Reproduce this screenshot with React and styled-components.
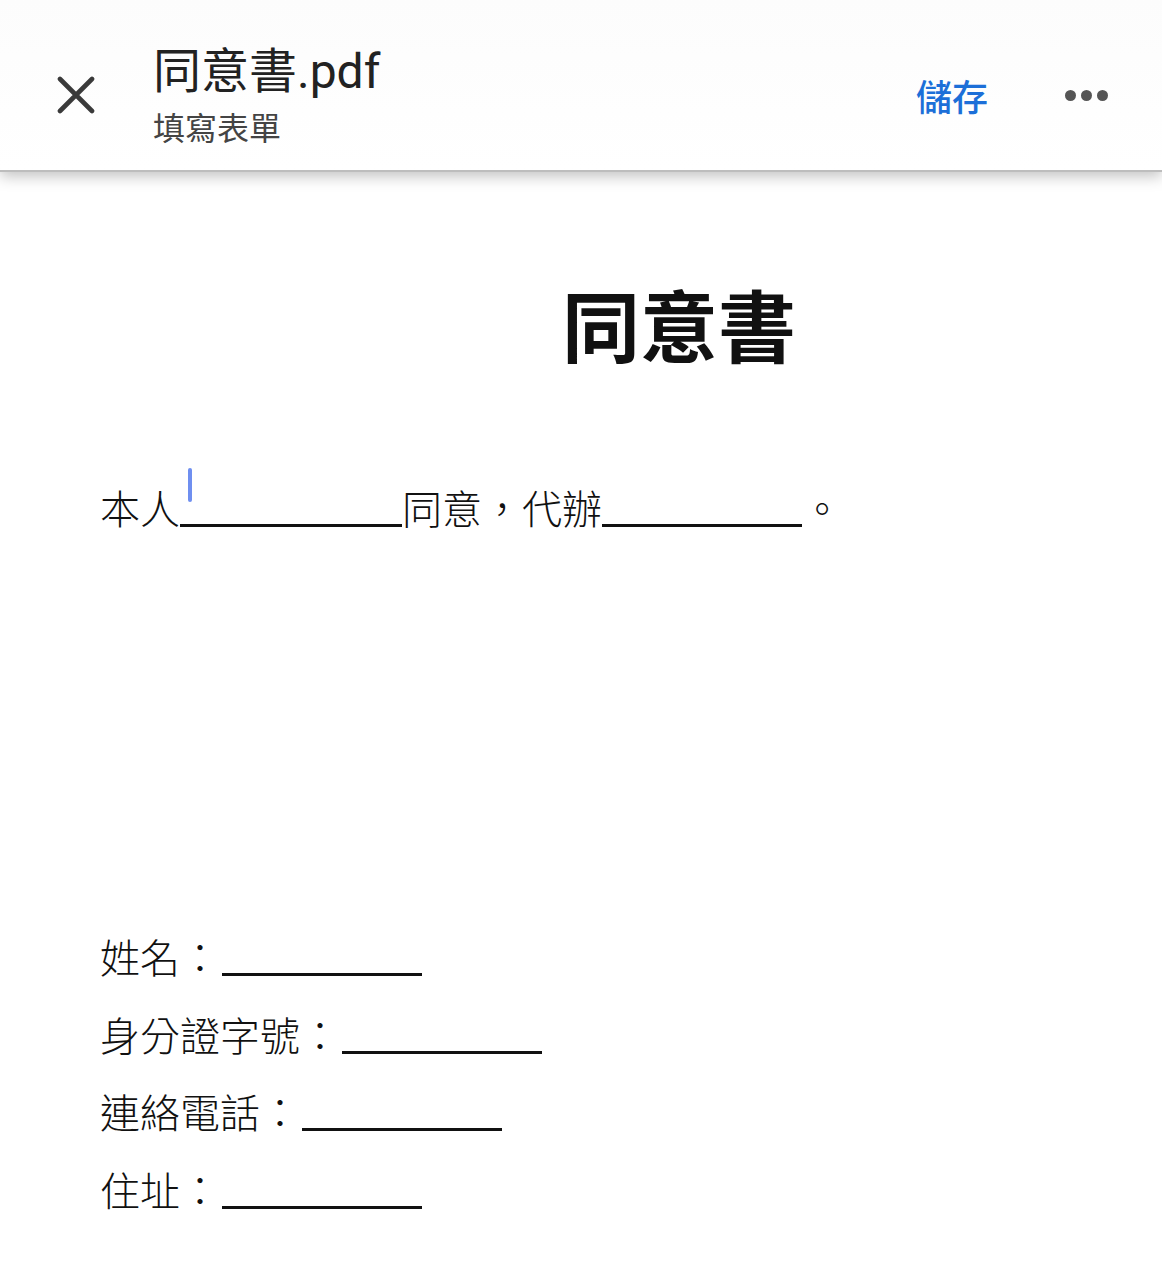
import React from "react";
import styled, { createGlobalStyle } from "styled-components";

const Global = createGlobalStyle`
  html, body { margin: 0; padding: 0; background: #ffffff; }
  body { font-family: "Roboto", "Noto Sans CJK TC", sans-serif; }
`;

const Page = styled.div`
  width: 1162px;
  min-height: 1280px;
  background: #ffffff;
  overflow: hidden;
`;

const TopBar = styled.header`
  position: relative;
  z-index: 1;
  height: 170px;
  box-sizing: border-box;
  padding: 20px 54px 0 57px;
  display: flex;
  align-items: center;
  background: linear-gradient(#fcfcfc, #ffffff);
  box-shadow: 0 2px 0 #bdbdbd, 0 6px 14px rgba(0, 0, 0, 0.25);
`;

const CloseButton = styled.button`
  width: 38px;
  height: 38px;
  padding: 0;
  border: 0;
  background: none;
  display: flex;
  align-items: center;
  justify-content: center;
  margin-right: 58px;
  color: #3a3a3a;
`;

const TitleBlock = styled.div`
  flex: 1;
  display: flex;
  flex-direction: column;
  gap: 6px;
  margin-top: 0;
`;

const FileName = styled.div`
  font-family: "Roboto", "Noto Sans CJK TC", sans-serif;
  font-size: 48px;
  line-height: 56px;
  color: #222222;
`;

const Subtitle = styled.div`
  font-family: "Noto Sans CJK TC", sans-serif;
  font-size: 32px;
  line-height: 40px;
  color: #444444;
`;

const SaveButton = styled.button`
  border: 0;
  background: none;
  padding: 0;
  font-family: "Noto Sans CJK TC", sans-serif;
  font-size: 36px;
  font-weight: 500;
  line-height: 44px;
  color: #1c6fd8;
  margin-right: 77px;
`;

const MoreButton = styled.div`
  display: flex;
  gap: 5px;
  align-items: center;
`;

const Dot = styled.span`
  width: 11px;
  height: 11px;
  border-radius: 50%;
  background: #555555;
`;

const Sheet = styled.main`
  padding: 111px 0 0 100px;
  font-family: "Noto Sans CJK TC", "Noto Sans CJK JP", sans-serif;
  color: #111111;
`;

const DocTitle = styled.h1`
  margin: 0 0 112px 462px;
  font-size: 78px;
  line-height: 84px;
  font-weight: 700;
  letter-spacing: 0;
`;

const Sentence = styled.p`
  margin: 0;
  font-size: 40px;
  line-height: 60px;
  font-weight: 300;
  white-space: nowrap;
`;

const Blank = styled.span`
  position: relative;
  display: inline-block;
  width: ${(p) => p.$w}px;
  height: 3px;
  margin-left: ${(p) => p.$gap || 0}px;
  background: #111111;
  vertical-align: -3px;
`;

const Caret = styled.span`
  position: absolute;
  left: 8px;
  bottom: 25px;
  width: 4px;
  height: 34px;
  border-radius: 2px;
  background: #6f8ff0;
`;

const Fields = styled.div`
  margin-top: 381px;
  display: flex;
  flex-direction: column;
`;

const FieldRow = styled.div`
  font-size: 40px;
  line-height: 77.5px;
  font-weight: 300;
  white-space: nowrap;
`;

const CloseIcon = () => (
  <svg width="38" height="38" viewBox="0 0 38 38" fill="none">
    <path d="M3 3 L35 35 M35 3 L3 35" stroke="currentColor" strokeWidth="4.6" strokeLinecap="round" />
  </svg>
);

const fields = [
  "姓名：",
  "身分證字號：",
  "連絡電話：",
  "住址：",
];

export default function App() {
  return (
    <Page>
      <Global />
      <TopBar>
        <CloseButton aria-label="close">
          <CloseIcon />
        </CloseButton>
        <TitleBlock>
          <FileName>同意書.pdf</FileName>
          <Subtitle>填寫表單</Subtitle>
        </TitleBlock>
        <SaveButton>儲存</SaveButton>
        <MoreButton>
          <Dot />
          <Dot />
          <Dot />
        </MoreButton>
      </TopBar>
      <Sheet>
        <DocTitle>同意書</DocTitle>
        <Sentence>
          本人
          <Blank $w={222}>
            <Caret />
          </Blank>
          同意，代辦
          <Blank $w={200} />
          。
        </Sentence>
        <Fields>
          {fields.map((f) => (
            <FieldRow key={f}>
              {f}
              <Blank $w={200} $gap={2} />
            </FieldRow>
          ))}
        </Fields>
      </Sheet>
    </Page>
  );
}
